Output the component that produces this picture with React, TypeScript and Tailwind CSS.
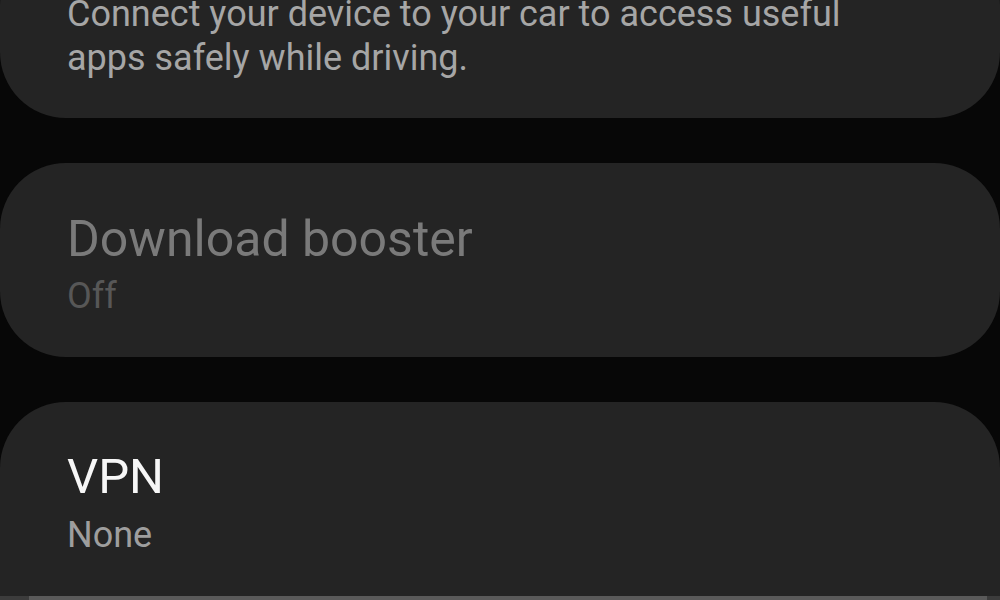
import React from "react";

const font = { fontFamily: "Roboto, 'Noto Sans', sans-serif" };

export default function App() {
  return (
    <div
      className="w-[1000px] h-[600px] overflow-hidden bg-[#070707] flex flex-col"
      style={font}
    >
      <div className="mt-[-60px] h-[178px] shrink-0 rounded-[66px] bg-[#242424] pl-[67px] pr-[68px] flex flex-col justify-end pb-[38px]">
        <p className="text-[36px] leading-[44px] text-[#a6a6a6]">
          Connect your device to your car to access useful
          <br />
          apps safely while driving.
        </p>
      </div>

      <div className="mt-[45px] h-[194px] shrink-0 rounded-[66px] bg-[#242424] pl-[67px] pr-[68px] pt-[46px] flex flex-col">
        <div className="text-[50px] leading-[60px] text-[#7a7a7a]">Download booster</div>
        <div className="mt-[5px] text-[36px] leading-[44px] text-[#575757]">Off</div>
      </div>

      <div className="mt-[45px] h-[194px] shrink-0 rounded-t-[66px] bg-[#242424] pl-[67px] pr-[68px] pt-[45px] flex flex-col">
        <div className="text-[49px] leading-[60px] text-[#f7f7f7]">VPN</div>
        <div className="mt-[6px] text-[36px] leading-[44px] text-[#9e9e9e]">None</div>
      </div>

      <div className="h-[4px] shrink-0 bg-[#3c3c3c] flex">
        <div className="ml-[29px] w-[958px] h-full bg-[#5a5a5a]" />
      </div>
    </div>
  );
}
